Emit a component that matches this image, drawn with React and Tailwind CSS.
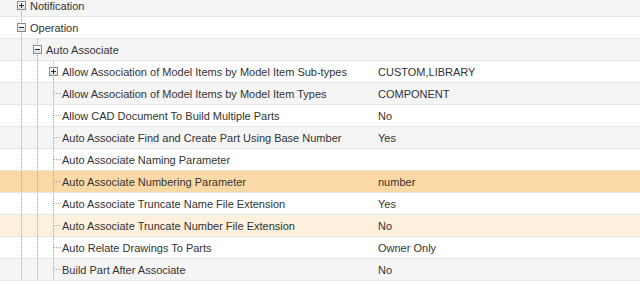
import React from 'react';

const rows = [
  { label: 'Notification', level: 0, toggle: 'plus', bg: 'gray' },
  { label: 'Operation', level: 0, toggle: 'minus', bg: 'white' },
  { label: 'Auto Associate', level: 1, toggle: 'minus', bg: 'gray' },
  { label: 'Allow Association of Model Items by Model Item Sub-types', value: 'CUSTOM,LIBRARY', level: 2, toggle: 'plus', bg: 'white' },
  { label: 'Allow Association of Model Items by Model Item Types', value: 'COMPONENT', level: 2, bg: 'gray' },
  { label: 'Allow CAD Document To Build Multiple Parts', value: 'No', level: 2, bg: 'white' },
  { label: 'Auto Associate Find and Create Part Using Base Number', value: 'Yes', level: 2, bg: 'gray' },
  { label: 'Auto Associate Naming Parameter', value: '', level: 2, bg: 'white' },
  { label: 'Auto Associate Numbering Parameter', value: 'number', level: 2, bg: 'selected' },
  { label: 'Auto Associate Truncate Name File Extension', value: 'Yes', level: 2, bg: 'white' },
  { label: 'Auto Associate Truncate Number File Extension', value: 'No', level: 2, bg: 'hover' },
  { label: 'Auto Relate Drawings To Parts', value: 'Owner Only', level: 2, bg: 'white' },
  { label: 'Build Part After Associate', value: 'No', level: 2, bg: 'gray' },
];

const bgClass = {
  gray: 'bg-[#f5f5f5]',
  white: 'bg-white',
  selected: 'bg-[#fad9a6]',
  hover: 'bg-[#fdf0dc]',
};

const Toggle = ({ kind }) => (
  <svg width="9" height="9" viewBox="0 0 9 9" className="relative block">
    <defs>
      <linearGradient id={`g-${kind}`} x1="0" y1="0" x2="0" y2="1">
        <stop offset="0" stopColor="#ffffff" />
        <stop offset="1" stopColor="#dcdcdc" />
      </linearGradient>
    </defs>
    <rect x="0.5" y="0.5" width="8" height="8" fill={`url(#g-${kind})`} stroke="#8c8c8c" />
    <rect x="2" y="4" width="5" height="1" fill="#2b2b2b" />
    {kind === 'plus' && <rect x="4" y="2" width="1" height="5" fill="#2b2b2b" />}
  </svg>
);

const Guide = () => (
  <div className="w-4 h-full flex justify-center shrink-0">
    <div className="w-0 h-full border-l border-dotted border-[#a8a8a8]" />
  </div>
);

const NodeCell = ({ toggle }) => (
  <div className="w-4 h-full shrink-0 relative flex items-center justify-center">
    <div className="absolute left-[8px] top-0 h-full border-l border-dotted border-[#a8a8a8]" />
    {toggle ? (
      <Toggle kind={toggle} />
    ) : (
      <div className="absolute left-[9px] top-[10px] w-[7px] border-t border-dotted border-[#a8a8a8]" />
    )}
  </div>
);

const Row = ({ row }) => (
  <div className={`flex h-[22px] border-b border-[#e6e6e6] ${bgClass[row.bg]}`}>
    <div className="w-[378px] shrink-0 flex items-center h-full pl-[13px]">
      {Array.from({ length: row.level }).map((_, i) => (
        <Guide key={i} />
      ))}
      <NodeCell toggle={row.toggle} />
      <span className="whitespace-nowrap pl-px pt-px">{row.label}</span>
    </div>
    <div className="flex items-center h-full whitespace-nowrap pt-px">{row.value}</div>
  </div>
);

export default function App() {
  return (
    <div className="w-[640px] h-[284px] overflow-hidden bg-white">
      <div
        className="-mt-[5px] text-[11px] text-[#333333]"
        style={{ fontFamily: '"Liberation Sans", Arial, sans-serif' }}
      >
        {rows.map((row, i) => (
          <Row key={i} row={row} />
        ))}
      </div>
    </div>
  );
}
